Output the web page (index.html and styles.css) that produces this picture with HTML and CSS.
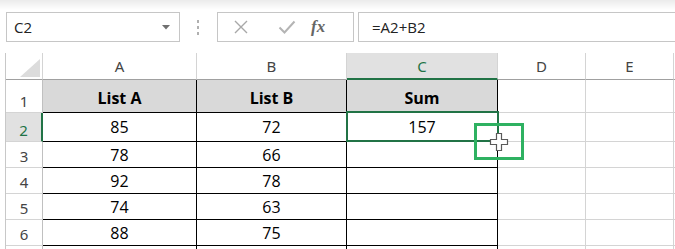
FILE: index.html
```html
<!doctype html>
<html>
  <head>
    <meta charset=utf-8>
    <title>Sum</title>
    <link rel="stylesheet" href="styles.css">
  </head>
  <body>
    <div class=ribbon-edge></div>

    <div class=formula-bar>
      <div class=name-box>
        <span>C2</span>
        <svg class=drop width=8 height=5 viewBox="0 0 8 5"><path d="M0 0h8L4 4.5z" fill="#707070"/></svg>
      </div>
      <div class=grip><i></i><i></i><i></i></div>
      <div class=buttons>
        <svg class=btn-x width=16 height=14 viewBox="0 0 16 14"><path d="M2 1l12 12M14 1L2 13" stroke="#a8a8a8" stroke-width="1.4" fill="none"/></svg>
        <svg class=btn-ok width=18 height=14 viewBox="0 0 18 14"><path d="M1.5 7.5l5 5L16.5 1.5" stroke="#b4b4b4" stroke-width="2" fill="none"/></svg>
        <span class=fx>fx</span>
      </div>
      <div class=formula>=A2+B2</div>
    </div>

    <div class=sheet>
      <div class="hd corner"><svg width=20 height=18 viewBox="0 0 20 18"><path d="M20 0v18H0z" fill="#dcdcdc"/></svg></div>
      <div class="hd col">A</div>
      <div class="hd col">B</div>
      <div class="hd col active">C</div>
      <div class="hd col">D</div>
      <div class="hd col">E</div>
      <div class="hd col rest"></div>
    </div>

    <script>
      const rows = [
        ['List A', 'List B', 'Sum'],
        ['85', '72', '157'],
        ['78', '66', ''],
        ['92', '78', ''],
        ['74', '63', ''],
        ['88', '75', ''],
        ['', '', '']
      ];
      const sheet = document.querySelector('.sheet');
      rows.forEach((row, i) => {
        let head = document.createElement('div');
        head.className = 'hd row' + (i == 1 ? ' active' : '');
        head.textContent = i < 6 ? i + 1 : '';
        sheet.appendChild(head);
        for (let value of row) {
          let cell = document.createElement('div');
          cell.className = 'cell data' + (i == 0 ? ' title' : '');
          cell.textContent = value;
          sheet.appendChild(cell);
        }
        for (let k = 0; k < 3; k++) {
          let cell = document.createElement('div');
          cell.className = 'cell' + (k == 2 ? ' rest' : '');
          sheet.appendChild(cell);
        }
      });
      let sel = document.createElement('div');
      sel.className = 'selection';
      sheet.appendChild(sel);
      let handle = document.createElement('div');
      handle.className = 'fill-cursor';
      handle.innerHTML = '<svg width=20 height=20 viewBox="0 0 20 20"><path d="M7.5 1.5h5v6h6v5h-6v6h-5v-6h-6v-5h6z" fill="#fff" stroke="#5a5a5a" stroke-width="1.2"/></svg>';
      sheet.appendChild(handle);
    </script>
  </body>
</html>
```

FILE: styles.css
```css
body {
  margin: 0;
  background: #fff;
  font-family: 'Open Sans', 'Noto Sans', sans-serif;
  overflow: hidden;
}

.ribbon-edge {
  height: 10px;
  background: linear-gradient(#ebebeb, #fff);
}

.formula-bar {
  display: flex;
  align-items: center;
  height: 30px;
  margin: 2px -20px 0 6px;
}
.name-box {
  box-sizing: border-box;
  width: 174px;
  height: 30px;
  border: 1px solid #c6c6c6;
  display: flex;
  align-items: center;
  justify-content: space-between;
  padding: 0 9px 0 7px;
  font-size: 15px;
  color: #222;
}
.drop { margin-top: 1px }
.grip {
  display: flex;
  flex-direction: column;
  gap: 3px;
  margin: 0 18px 0 17px;
}
.grip i {
  display: block;
  width: 2px;
  height: 3px;
  background: #b0b0b0;
}
.buttons {
  box-sizing: border-box;
  width: 137px;
  height: 30px;
  border: 1px solid #c6c6c6;
  display: flex;
  align-items: center;
  padding-left: 15px;
}
.btn-ok { margin-left: 29px }
.fx {
  margin-left: 15px;
  font-family: 'Liberation Serif', serif;
  font-style: italic;
  font-weight: bold;
  font-size: 17px;
  color: #666;
}
.formula {
  flex: 1;
  box-sizing: border-box;
  height: 30px;
  margin-left: 4px;
  border: 1px solid #c6c6c6;
  padding: 4px 13px;
  font-size: 15px;
  color: #222;
}

.sheet {
  position: relative;
  display: grid;
  grid-template-columns: 37px 154px 150px 151px 88px 88px 1fr;
  grid-template-rows: 27px 33px 29px 26px 26px 26px 26px 10px;
  margin: 11px 0 0 5px;
  border-left: 1px solid #c8c8c8;
}
.sheet > div {
  box-sizing: border-box;
  border-right: 1px solid #d4d4d4;
  border-bottom: 1px solid #d4d4d4;
}

.hd {
  display: flex;
  align-items: center;
  justify-content: center;
  font-family: 'Noto Sans', sans-serif;
  font-size: 15px;
  color: #444;
}
.hd.col { border-bottom-color: #a0a0a0 }
.hd.corner {
  align-items: flex-end;
  justify-content: flex-end;
  padding: 0 2px 2px 0;
  border-bottom-color: #a0a0a0;
}
.hd.corner svg { display: block }
.hd.row {
  align-items: flex-end;
  padding-bottom: 1px;
  border-right-color: #c0c0c0;
}
.hd.col.active {
  background: #e1e1e1;
  color: #217346;
  border-bottom: 2px solid #217346;
}
.hd.row.active {
  background: #e1e1e1;
  color: #217346;
  border-right: 2px solid #217346;
}
.sheet > .rest { border-right: none }

.cell.data {
  display: flex;
  align-items: center;
  justify-content: center;
  font-size: 16px;
  color: #000;
  border-right-color: #000;
  border-bottom-color: #000;
}
.cell.title {
  background: #d9d9d9;
  font-weight: bold;
  align-items: flex-end;
  padding-bottom: 3px;
}

.selection {
  position: absolute;
  left: 340px;
  top: 58px;
  width: 153px;
  height: 31px;
  border: 2px solid #217346 !important;
}
.fill-cursor {
  position: absolute;
  left: 468px;
  top: 70px;
  width: 50px;
  height: 37px;
  border: 3px solid #2eb161 !important;
  display: flex;
  align-items: center;
  justify-content: center;
}
.fill-cursor svg { display: block }
```
